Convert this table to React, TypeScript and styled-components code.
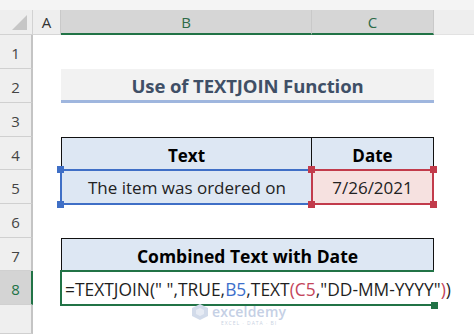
import React from "react";
import styled, { createGlobalStyle } from "styled-components";

const GREEN = "#217346";
const BLUE_REF = "#3f6fc6";
const RED_REF = "#c23b4b";
const LIGHT_BLUE = "#dde7f3";

const Global = createGlobalStyle`
  *, *::before, *::after { box-sizing: border-box; }
  html, body { margin: 0; padding: 0; background: #fff; overflow: hidden; }
  body { font-family: "Open Sans", "Liberation Sans", sans-serif; }
`;

const Page = styled.div`
  position: relative;
  width: 474px;
  height: 334px;
  overflow: hidden;
  display: flex;
  flex-direction: column;
  background: #fff;
`;

const TopStrip = styled.div`
  flex: none;
  height: 10px;
  background: #f4f4f4;
`;

const Sheet = styled.div`
  flex: 1;
  display: grid;
  grid-template-columns: 33px 28px 251px 122px 1fr;
  grid-template-rows: 25px 34px 34px 34px 33px 34px 34px 33px 34px 1fr;
`;

type Place = { $col: string; $row: string };

const Corner = styled.div`
  grid-column: 1;
  grid-row: 1;
  position: relative;
  background: #eeeeee;
  border-right: 1px solid #d2d2d2;
  border-bottom: 1px solid #d2d2d2;
  &::after {
    content: "";
    position: absolute;
    right: 5px;
    bottom: 4px;
    width: 0;
    height: 0;
    border-left: 15px solid transparent;
    border-bottom: 15px solid #c6c6c6;
  }
`;

const ColHeader = styled.div<Place & { $selected?: boolean }>`
  grid-column: ${(p) => p.$col};
  grid-row: ${(p) => p.$row};
  display: flex;
  align-items: center;
  justify-content: center;
  font-size: 15px;
  color: ${(p) => (p.$selected ? "#2e6a47" : "#333")};
  background: ${(p) => (p.$selected ? "#d6d6d6" : "#eeeeee")};
  border-right: 1px solid #c9c9c9;
  border-bottom: ${(p) => (p.$selected ? `2px solid ${GREEN}` : "1px solid #d6d6d6")};
`;

const FillerHeader = styled.div`
  grid-column: 5;
  grid-row: 1;
  background: #eeeeee;
  border-bottom: 1px solid #e2e2e2;
`;

const RowHeader = styled.div<{ $row: number; $selected?: boolean }>`
  grid-column: 1;
  grid-row: ${(p) => p.$row};
  display: flex;
  align-items: center;
  justify-content: center;
  padding-top: 3px;
  font-size: 15px;
  color: ${(p) => (p.$selected ? GREEN : "#444")};
  background: ${(p) => (p.$selected ? "#d4d4d4" : "#efefef")};
  border-bottom: 1px solid #d0d0d0;
  border-right: ${(p) => (p.$selected ? `2px solid ${GREEN}` : "2px solid #c4c4c4")};
`;

const TitleCell = styled.div`
  grid-column: 3 / 5;
  grid-row: 3;
  display: flex;
  align-items: center;
  justify-content: center;
  padding-top: 1px;
  background: #f2f2f2;
  border-bottom: 3px solid #9fb6de;
  color: #3f4f66;
  font-size: 18.5px;
  font-weight: 700;
  letter-spacing: -0.1px;
`;

const HeadCell = styled.div<Place & { $left?: boolean }>`
  grid-column: ${(p) => p.$col};
  grid-row: ${(p) => p.$row};
  display: flex;
  align-items: center;
  justify-content: center;
  padding-top: 2px;
  background: ${LIGHT_BLUE};
  border-top: 1px solid #111;
  border-right: 1px solid #111;
  border-left: ${(p) => (p.$left ? "1px solid #111" : "none")};
  color: #000;
  font-size: 17px;
  font-weight: 700;
`;

const RefCell = styled.div<Place & { $color: string; $fill: string; $noRight?: boolean }>`
  grid-column: ${(p) => p.$col};
  grid-row: ${(p) => p.$row};
  position: relative;
  display: flex;
  align-items: center;
  justify-content: center;
  margin: -1px 0 -1px -1px;
  background: ${(p) => p.$fill};
  border: 2px solid ${(p) => p.$color};
  border-right: ${(p) => (p.$noRight ? "none" : `2px solid ${p.$color}`)};
  color: #222;
  font-size: 17px;
`;

const Handle = styled.span<{ $v: "top" | "bottom"; $h: "left" | "right"; $color: string }>`
  position: absolute;
  ${(p) => p.$v}: -5px;
  ${(p) => p.$h}: -5px;
  width: 7px;
  height: 7px;
  background: ${(p) => p.$color};
`;

const CombinedHeader = styled.div`
  grid-column: 3 / 5;
  grid-row: 8;
  display: flex;
  align-items: center;
  justify-content: center;
  padding-top: 2px;
  background: ${LIGHT_BLUE};
  border-top: 1px solid #111;
  border-left: 1px solid #111;
  border-right: 1px solid #111;
  color: #000;
  font-size: 17.5px;
  font-weight: 700;
`;

const FormulaCell = styled.div`
  grid-column: 3 / 5;
  grid-row: 9;
  position: relative;
  display: flex;
  align-items: center;
  margin: -1px 0 -1px -1px;
  padding: 2px 0 0 3px;
  border-top: 2px solid ${GREEN};
  border-left: 2px solid ${GREEN};
  border-bottom: 2px solid ${GREEN};
  color: #1f1f1f;
  font-size: 17.4px;
  white-space: nowrap;
  overflow: visible;
`;

const Token = styled.span<{ $tone?: "blue" | "red" }>`
  color: ${(p) => (p.$tone === "blue" ? "#3d6fcb" : p.$tone === "red" ? "#c4455a" : "inherit")};
`;

const CornerHandle = styled.span`
  position: absolute;
  right: -4px;
  bottom: -5px;
  width: 7px;
  height: 7px;
  background: ${GREEN};
`;

const Watermark = styled.div`
  position: absolute;
  left: 191px;
  top: 304px;
  display: flex;
  align-items: flex-start;
  gap: 3px;
  pointer-events: none;
`;

const MarkWords = styled.div`
  display: flex;
  flex-direction: column;
  align-items: center;
`;

const MarkName = styled.span`
  font-size: 14px;
  font-weight: 600;
  line-height: 16px;
  color: #c5d0e5;
  letter-spacing: 0.2px;
`;

const MarkTag = styled.span`
  font-size: 5px;
  line-height: 6px;
  color: #c9d2e2;
  letter-spacing: 1px;
`;

export default function App() {
  const rows = [1, 2, 3, 4, 5, 6, 7, 8];
  return (
    <>
      <Global />
      <Page>
        <TopStrip />
        <Sheet>
          <Corner />
          <ColHeader $col="2" $row="1">A</ColHeader>
          <ColHeader $col="3" $row="1" $selected>B</ColHeader>
          <ColHeader $col="4" $row="1" $selected>C</ColHeader>
          <FillerHeader />
          {rows.map((n) => (
            <RowHeader key={n} $row={n + 1} $selected={n === 8}>
              {n}
            </RowHeader>
          ))}
          <RowHeader $row={10} />

          <TitleCell>Use of TEXTJOIN Function</TitleCell>

          <HeadCell $col="3" $row="5" $left>Text</HeadCell>
          <HeadCell $col="4" $row="5">Date</HeadCell>

          <RefCell $col="3" $row="6" $color={BLUE_REF} $fill={LIGHT_BLUE} $noRight>
            The item was ordered on
            <Handle $v="top" $h="left" $color={BLUE_REF} />
            <Handle $v="bottom" $h="left" $color={BLUE_REF} />
          </RefCell>
          <RefCell $col="4" $row="6" $color={RED_REF} $fill="#f6e1e0">
            7/26/2021
            <Handle $v="top" $h="left" $color={RED_REF} />
            <Handle $v="bottom" $h="left" $color={RED_REF} />
            <Handle $v="top" $h="right" $color={RED_REF} />
            <Handle $v="bottom" $h="right" $color={RED_REF} />
          </RefCell>

          <CombinedHeader>Combined Text with Date</CombinedHeader>

          <FormulaCell>
            <Token>=TEXTJOIN(" ",TRUE,</Token>
            <Token $tone="blue">B5</Token>
            <Token>,TEXT</Token>
            <Token $tone="red">(C5</Token>
            <Token>,"DD-MM-YYYY"</Token>
            <Token $tone="red">)</Token>
            <Token>)</Token>
            <CornerHandle />
          </FormulaCell>
        </Sheet>

        <Watermark>
          <svg width="18" height="16" viewBox="0 0 18 16">
            <polygon points="9,0 17,4 17,12 9,16 1,12 1,4" fill="#d2dbea" />
            <polygon points="9,4 13,6 13,10 9,12 5,10 5,6" fill="#e6ebf4" />
          </svg>
          <MarkWords>
            <MarkName>exceldemy</MarkName>
            <MarkTag>EXCEL · DATA · BI</MarkTag>
          </MarkWords>
        </Watermark>
      </Page>
    </>
  );
}
